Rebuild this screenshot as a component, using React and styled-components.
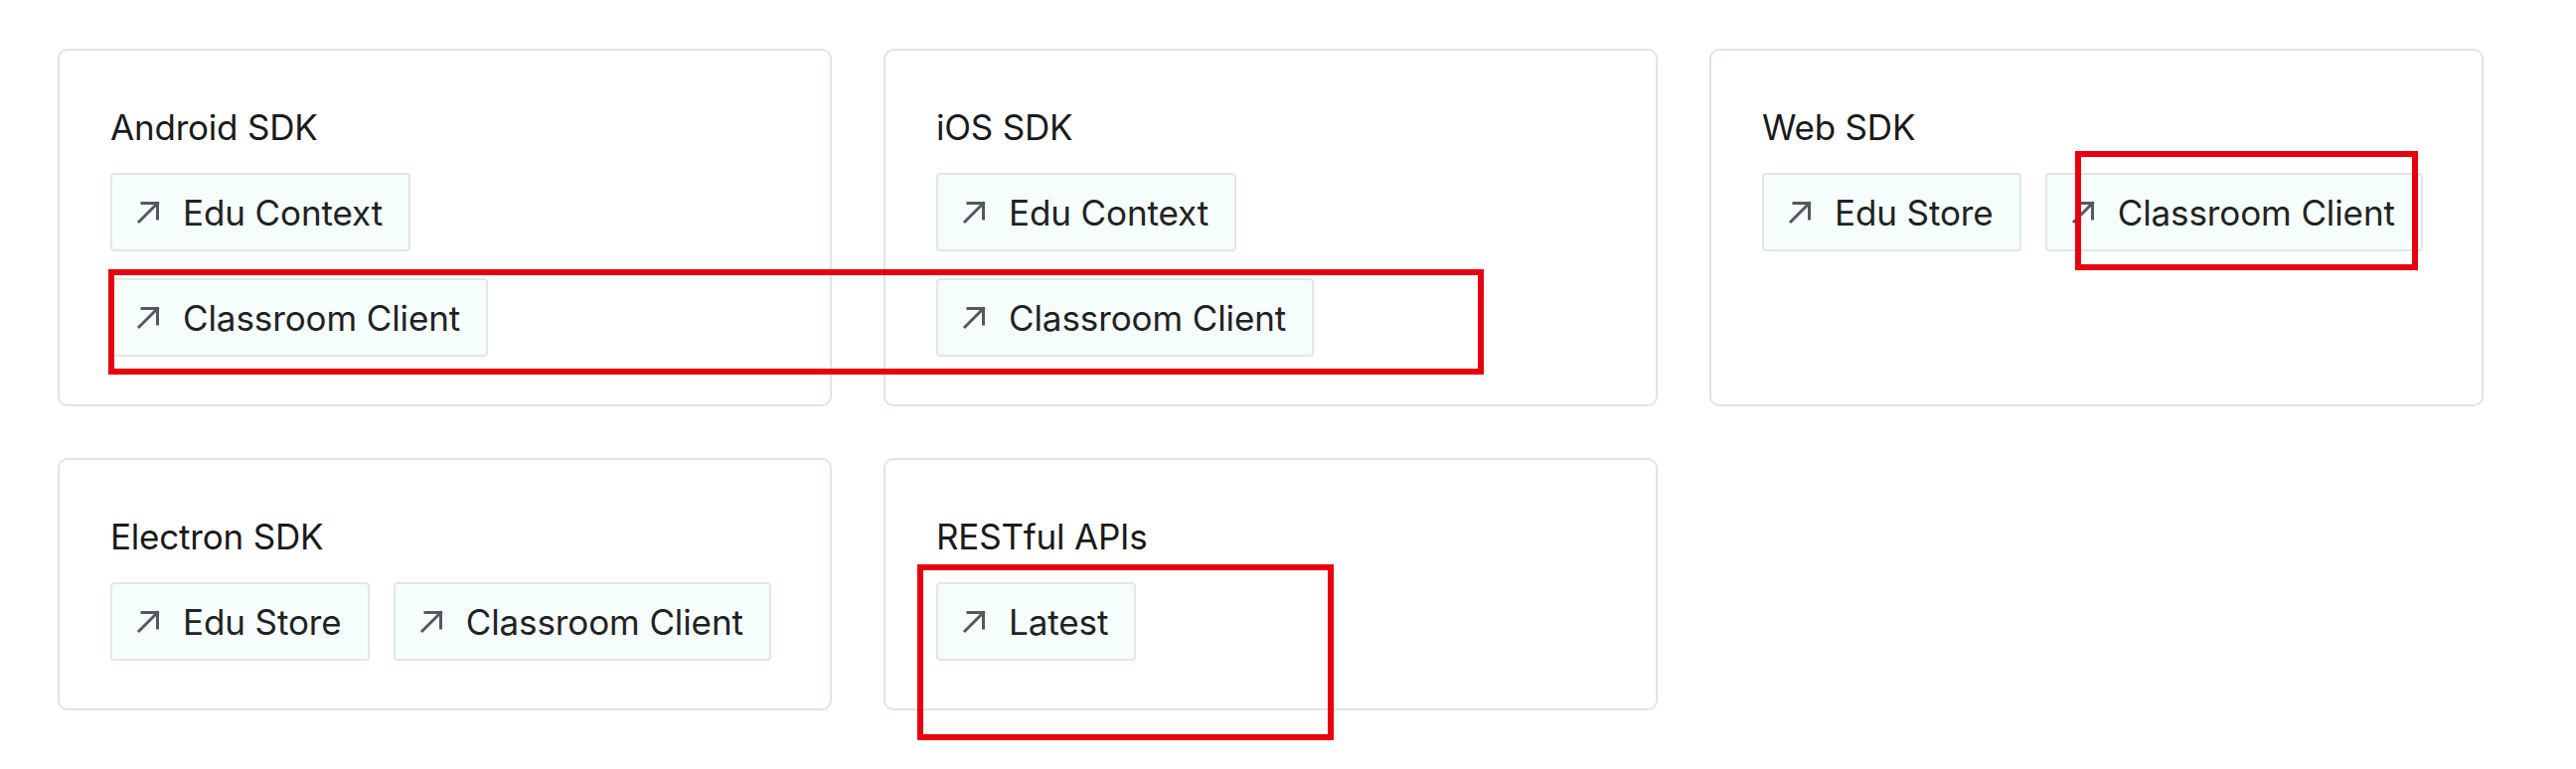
import React from "react";
import styled, { createGlobalStyle } from "styled-components";

const GlobalStyle = createGlobalStyle`
  html, body {
    margin: 0;
    padding: 0;
    background: #ffffff;
  }
  body {
    font-family: Inter, "Noto Sans", "Liberation Sans", sans-serif;
    color: #222222;
  }
`;

const sections = [
  { title: "Android SDK", links: ["Edu Context", "Classroom Client"] },
  { title: "iOS SDK", links: ["Edu Context", "Classroom Client"] },
  { title: "Web SDK", links: ["Edu Store", "Classroom Client"] },
  { title: "Electron SDK", links: ["Edu Store", "Classroom Client"] },
  { title: "RESTful APIs", links: ["Latest"] },
];

// red annotation boxes drawn over the screenshot
const marks = [
  { left: 109, top: 271, width: 1384, height: 106 },
  { left: 2088, top: 152, width: 345, height: 120 },
  { left: 923, top: 568, width: 419, height: 177 },
];

function ArrowIcon() {
  return (
    <Icon viewBox="0 0 10 10" fill="none">
      <path
        d="M1.2 8.8 L8.6 1.4 M2.4 1.4 H8.6 V7.6"
        stroke="currentColor"
        strokeWidth="1.2"
        strokeLinecap="square"
      />
    </Icon>
  );
}

function App() {
  return (
    <Page>
      <GlobalStyle />
      <Grid>
        {sections.map((s) => (
          <Card key={s.title}>
            <Title>{s.title}</Title>
            <Links>
              {s.links.map((l) => (
                <Chip key={l} href="#">
                  <ArrowIcon />
                  {l}
                </Chip>
              ))}
            </Links>
          </Card>
        ))}
      </Grid>
      {marks.map((m, i) => (
        <Mark key={i} style={m} />
      ))}
    </Page>
  );
}

const Page = styled.div`
  position: relative;
  width: 2592px;
  height: 774px;
  padding: 49px 0 0 58px;
  box-sizing: border-box;
`;

const Grid = styled.div`
  display: grid;
  grid-template-columns: repeat(3, 779px);
  column-gap: 52px;
  row-gap: 52px;
  align-items: stretch;
`;

const Card = styled.div`
  border: 2px solid #dde4eb;
  border-radius: 10px;
  padding: 56px 28px 48px 51px;
  background: #ffffff;
`;

const Title = styled.div`
  font-size: 35px;
  line-height: 42px;
  font-weight: 400;
  color: #1a1a1a;
  letter-spacing: -0.2px;
`;

const Links = styled.div`
  display: flex;
  flex-wrap: wrap;
  gap: 27px 24px;
  margin-top: 25px;
`;

const Chip = styled.a`
  display: inline-flex;
  align-items: center;
  gap: 22px;
  height: 79px;
  padding: 0 26px 0 24px;
  box-sizing: border-box;
  background: #f5fdfd;
  border: 2px solid #e1e7ec;
  border-radius: 4px;
  font-size: 35px;
  color: #222222;
  text-decoration: none;
  letter-spacing: -0.1px;
  white-space: nowrap;
`;

const Icon = styled.svg`
  width: 25px;
  height: 25px;
  color: #55595d;
  flex-shrink: 0;
`;

const Mark = styled.div`
  position: absolute;
  box-sizing: border-box;
  border: 6px solid #e8000f;
  pointer-events: none;
`;

export default App;
